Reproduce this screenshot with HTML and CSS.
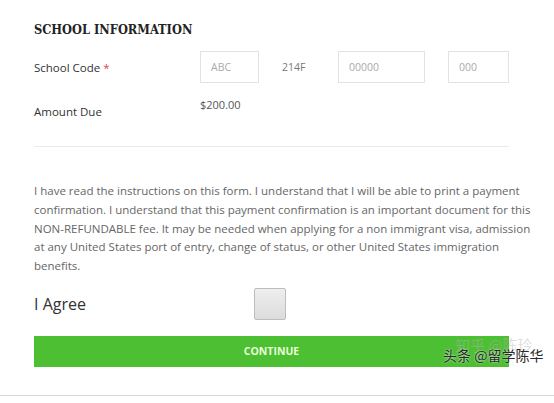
FILE: index.html
```html
<!DOCTYPE html>
<html>
<head>
<meta charset="utf-8">
<link rel="stylesheet" href="styles.css">
</head>
<body>
<div class="page">
  <div class="form">
    <h2 class="title">SCHOOL INFORMATION</h2>
    <div class="row code-row">
      <div class="label">School Code <span class="req">*</span></div>
      <div class="box box1">ABC</div>
      <div class="spacer"></div>
      <div class="fixed">214F</div>
      <div class="box box2">00000</div>
      <div class="spacer"></div>
      <div class="box box3">000</div>
    </div>
    <div class="row amount-row">
      <div class="label amount-label">Amount Due</div>
      <div class="amount">$200.00</div>
    </div>
    <hr class="divider">
    <p class="terms">I have read the instructions on this form. I understand that I will be able to print a payment<br>confirmation. I understand that this payment confirmation is an important document for this<br>NON-REFUNDABLE fee. It may be needed when applying for a non immigrant visa, admission<br>at any United States port of entry, change of status, or other United States immigration<br>benefits.</p>
    <div class="agree-row">
      <div class="agree-label">I Agree</div>
      <div class="checkbox"></div>
    </div>
    <div class="button">CONTINUE</div>
  </div>
  <div class="bottom-line"></div>
  <div class="wm-faint">知乎 @陈玲</div>
  <div class="wm">头条 @留学陈华</div>
</div>
</body>
</html>
```
FILE: styles.css
```css
* { box-sizing: border-box; }
html, body { margin: 0; padding: 0; background: #fff; }
body { font-family: "Open Sans", "Noto Sans", sans-serif; color: #333; }
.page { position: relative; width: 554px; height: 403px; overflow: hidden; }
.form { width: 475px; margin-left: 34px; padding-top: 20px; }
.title {
  font-family: "DejaVu Serif Condensed", "DejaVu Serif", serif;
  font-stretch: condensed;
  font-weight: bold;
  font-size: 12.7px;
  color: #222;
  margin: 0;
  line-height: 20px;
}
.row { display: flex; align-items: center; }
.code-row { margin-top: 11px; height: 32px; }
.label { width: 166px; font-size: 11.5px; color: #333; flex: none; }
.req { color: #e0454f; }
.box {
  height: 32px;
  border: 1px solid #e3e3e3;
  font-size: 10.5px;
  color: #aaa;
  padding-left: 10px;
  display: flex;
  align-items: center;
  flex: none;
}
.box1 { width: 59px; }
.box2 { width: 87px; }
.box3 { width: 61px; }
.spacer { width: 23px; flex: none; }
.fixed { width: 56px; flex: none; font-size: 10.5px; color: #777; }
.amount-row { margin-top: 14px; align-items: flex-start; height: 28px; }
.amount-label { padding-top: 7px; }
.amount { font-size: 11px; color: #555; }
.divider { border: 0; border-top: 1px solid #ebebeb; margin: 21px 0 0 0; }
.terms {
  margin: 35px 0 0 0;
  font-size: 11.5px;
  line-height: 18.75px;
  color: #666;
  white-space: nowrap;
}
.agree-row { display: flex; align-items: center; margin-top: 12px; height: 32px; }
.agree-label { width: 220px; font-size: 16px; color: #333; }
.checkbox {
  width: 32px; height: 32px;
  border: 1px solid #bdbdbd;
  border-radius: 2px;
  background: linear-gradient(#eeeeee, #dcdcdc);
}
.button {
  margin-top: 16px;
  height: 31px;
  background: #4cbf33;
  color: #eaffd8;
  font-weight: bold;
  font-size: 10.5px;
  display: flex;
  align-items: center;
  justify-content: center;
}
.bottom-line { position: absolute; left: 0; right: 0; top: 395px; border-top: 1px solid #d8d8d8; }
.wm, .wm-faint {
  position: absolute;
  font-family: "Noto Sans CJK SC", sans-serif;
  white-space: nowrap;
}
.wm { left: 443px; top: 345px; font-size: 14px; color: #2a2a2a; text-shadow: 0 0 2px #fff; }
.wm-faint { left: 455px; top: 334px; color: rgba(180,180,180,0.45); font-size: 15px; }
```
